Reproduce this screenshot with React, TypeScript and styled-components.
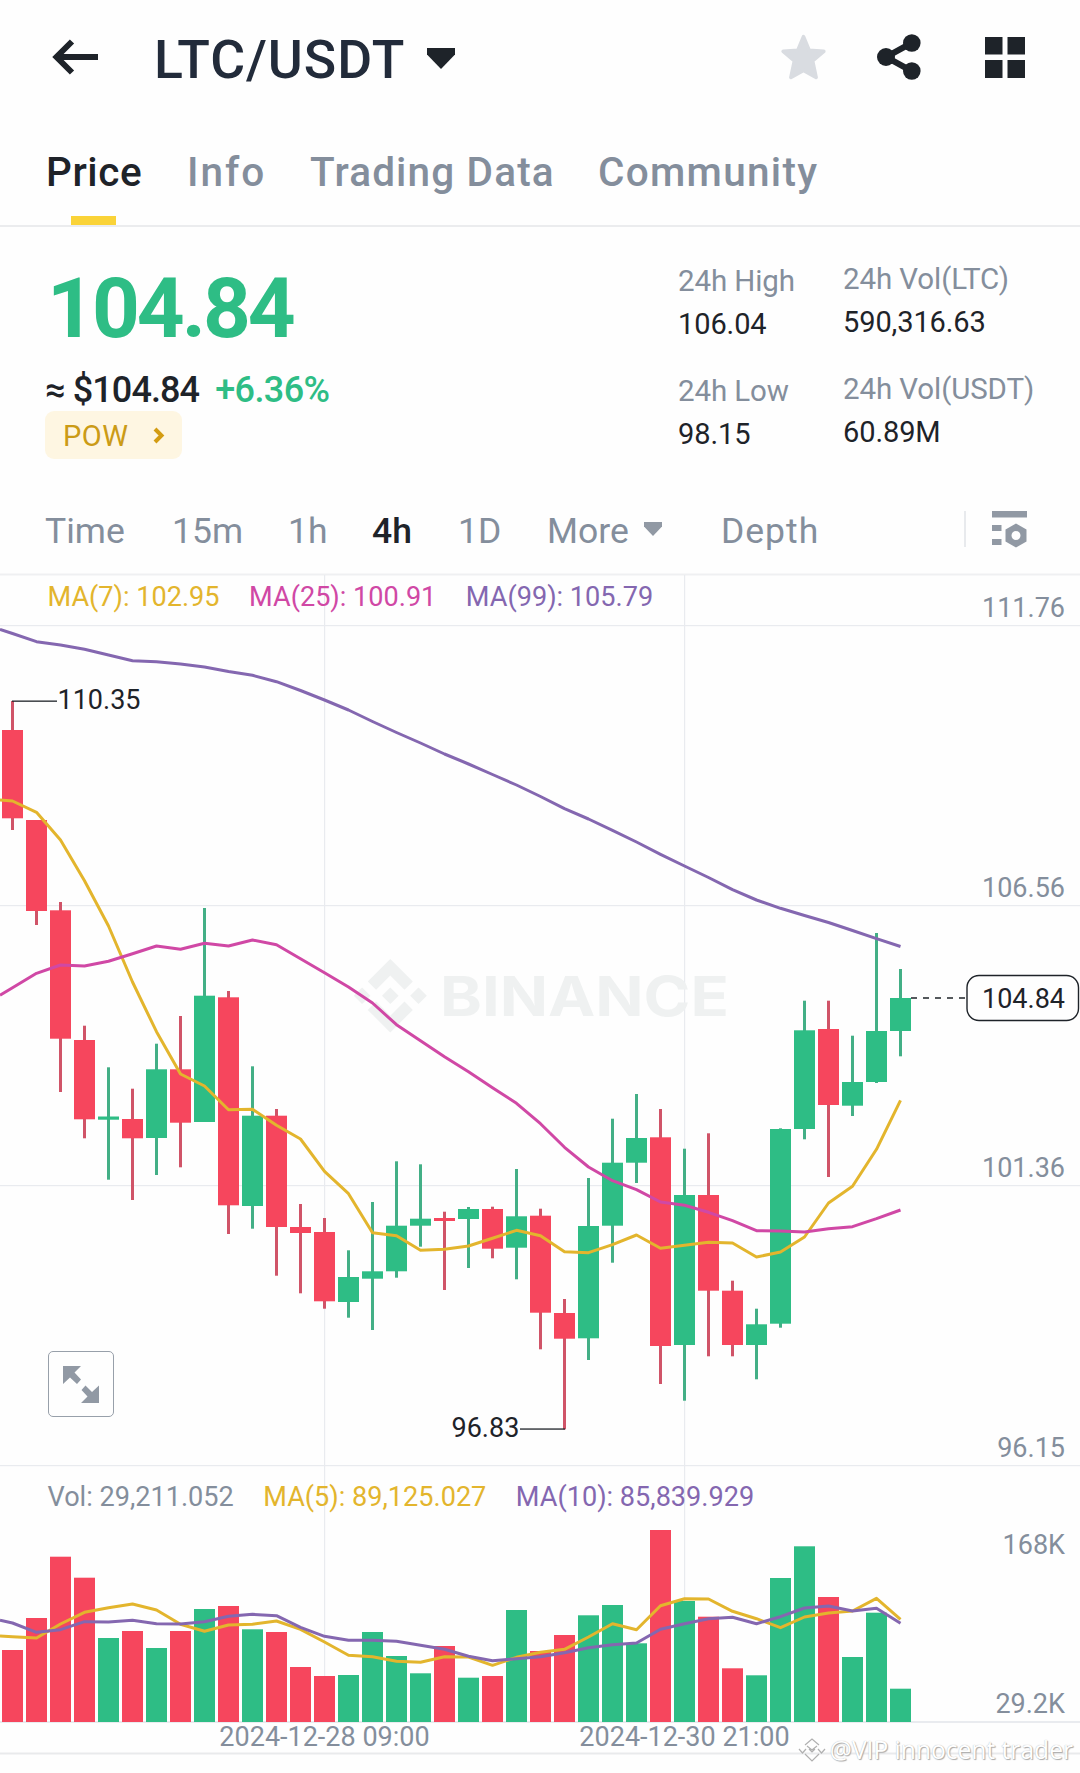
import React from "react";
import styled, { createGlobalStyle } from "styled-components";

const color = {
  ink: "#1e2329",
  title: "#222b3a",
  muted: "#848e9c",
  green: "#2ebd85",
  red: "#f6465d",
  greenWick: "#43af86",
  redWick: "#d05468",
  yellow: "#e3b52d",
  pink: "#d048a5",
  purple: "#8467b0",
  grid: "#e9ebef",
};

const GlobalStyle = createGlobalStyle`
  * { box-sizing: border-box; }
  html, body { margin: 0; padding: 0; background: #fefefe; }
  body { font-family: Roboto, "Liberation Sans", sans-serif; color: ${color.ink}; }
`;

const Screen = styled.main`
  display: flex;
  flex-direction: column;
  width: 1080px;
  height: 1773px;
  overflow: hidden;
  background: #fefefe;
`;

const Header = styled.header`
  display: flex;
  align-items: center;
  height: 118px;
  padding: 0 52px;
`;

const Pair = styled.h1`
  margin: 2px 18px 0 55px;
  width: 255px;
  font-size: 53.5px;
  line-height: 64px;
  font-weight: 500;
  letter-spacing: 0.95px;
  white-space: nowrap;
  color: ${color.title};
`;

const Actions = styled.div`
  display: flex;
  align-items: center;
  gap: 51px;
  margin-left: auto;
  padding-bottom: 4px;
`;

const Icon = styled.svg<{ $lift?: number }>`
  display: block;
  flex: none;
  margin-top: ${(p) => -(p.$lift ?? 0)}px;
`;

const Tabs = styled.nav`
  display: flex;
  height: 109px;
  padding: 26px 0 0 46px;
  border-bottom: 2px solid #ebecee;
`;

const Tab = styled.div<{ $w: number; $ls: number; $active?: boolean }>`
  display: flex;
  flex-direction: column;
  justify-content: space-between;
  flex: 0 0 ${(p) => p.$w}px;
  font-size: 40.5px;
  line-height: 56px;
  font-weight: 500;
  letter-spacing: ${(p) => p.$ls}px;
  white-space: nowrap;
  color: ${(p) => (p.$active ? color.ink : color.muted)};
`;

const Marker = styled.span`
  width: 45px;
  height: 9px;
  margin-left: 25px;
  background: #fad338;
`;

const Summary = styled.section`
  display: flex;
  height: 263px;
`;

const PriceColumn = styled.div`
  display: flex;
  flex-direction: column;
  align-items: flex-start;
  width: 678px;
  padding: 37px 0 0 45px;
`;

const LastPrice = styled.div`
  height: 90px;
  margin-left: 2px;
  font-size: 83.5px;
  line-height: 90px;
  font-weight: 700;
  letter-spacing: -3px;
  color: ${color.green};
`;

const FiatRow = styled.div`
  display: flex;
  gap: 16px;
  height: 57px;
  padding-top: 16px;
  font-size: 36px;
  line-height: 40px;
  font-weight: 500;
`;

const Fiat = styled.span`
  letter-spacing: -0.9px;
`;

const Change = styled.span`
  letter-spacing: -0.6px;
  color: ${color.green};
`;

const Tag = styled.div`
  display: flex;
  align-items: center;
  justify-content: space-between;
  width: 137px;
  height: 48px;
  padding: 1px 17px 0 18px;
  border-radius: 9px;
  font-size: 29px;
  letter-spacing: 0.5px;
  color: #cb9b16;
  background: #fef6e2;
`;

const Stats = styled.dl<{ $top: number; $w: number }>`
  display: flex;
  flex-direction: column;
  width: ${(p) => p.$w}px;
  margin: 0;
  padding-top: ${(p) => p.$top}px;
`;

const StatName = styled.dt`
  font-size: 29.5px;
  line-height: 42px;
  letter-spacing: -0.1px;
  white-space: nowrap;
  color: ${color.muted};
`;

const StatValue = styled.dd`
  margin: 1px 0 25px;
  font-size: 29px;
  line-height: 42px;
  letter-spacing: -0.1px;
  color: ${color.ink};
`;

const Intervals = styled.div`
  display: flex;
  align-items: center;
  height: 83px;
  padding: 0 0 1px 45px;
`;

const Interval = styled.span<{ $w: number; $ls?: number; $active?: boolean }>`
  display: flex;
  align-items: center;
  gap: 15px;
  flex: 0 0 ${(p) => p.$w}px;
  font-size: 35.5px;
  letter-spacing: ${(p) => p.$ls ?? 0}px;
  font-weight: ${(p) => (p.$active ? 500 : 400)};
  color: ${(p) => (p.$active ? color.ink : color.muted)};
`;

const Divider = styled.span`
  width: 2px;
  height: 36px;
  margin: -5px 26px 0 0;
  background: #e8eaed;
`;

const ChartArea = styled.section`
  position: relative;
  height: 1200px;
`;

const Plot = styled.svg`
  display: block;
  font-family: Roboto, "Liberation Sans", sans-serif;
  font-size: 27px;
`;

const Legend = styled.div<{ $top: number }>`
  position: absolute;
  top: ${(p) => p.$top}px;
  left: 47.5px;
  display: flex;
  gap: 29.5px;
  font-size: 27.1px;
  line-height: 36px;
  white-space: nowrap;
`;

const LegendItem = styled.span<{ $color: string }>`
  color: ${(p) => p.$color};
`;

const ExpandButton = styled.button`
  position: absolute;
  top: 778px;
  left: 48px;
  display: flex;
  align-items: center;
  justify-content: center;
  width: 66px;
  height: 66px;
  padding: 0;
  border: 1.5px solid #98a0aa;
  border-radius: 5px;
  background: #fefefe;
`;

const Credit = styled.div`
  position: absolute;
  top: 1159px;
  right: 7px;
  display: flex;
  align-items: center;
  gap: 4px;
  font-family: "Open Sans", "Noto Sans", sans-serif;
  font-size: 24.6px;
  line-height: 36px;
  white-space: nowrap;
  color: #fff;
  text-shadow: 0 0 1px #aaa, 1px 1px 1px #aaa;
`;

// [rising, high, body top, body bottom, low, volume top]
type Candle = [number, number, number, number, number, number];
const candles: Candle[] = [
  [0, 701, 730, 818.3, 830, 1650],
  [0, 820, 820, 911, 925, 1618],
  [0, 902, 910.3, 1038.7, 1092, 1556.7],
  [0, 1025.7, 1040, 1119.3, 1138.3, 1577.7],
  [1, 1067.3, 1116.5, 1119.7, 1179.7, 1638],
  [0, 1088.7, 1119, 1138.3, 1200, 1631],
  [1, 1043.7, 1069.3, 1138, 1175, 1648],
  [0, 1016, 1069.3, 1122.7, 1167.3, 1631],
  [1, 908, 995.7, 1122, 1122, 1609],
  [0, 991, 997.3, 1205.3, 1234, 1606],
  [1, 1066.3, 1115.7, 1206, 1228.7, 1629.3],
  [0, 1109, 1115.7, 1227, 1275.7, 1632],
  [0, 1204, 1227, 1233, 1293.3, 1667],
  [0, 1218, 1232, 1301.3, 1308.7, 1676],
  [1, 1250.3, 1277, 1302, 1317.7, 1675],
  [1, 1202, 1271.3, 1278.7, 1330, 1632],
  [1, 1161.3, 1225.7, 1271.3, 1277.7, 1656],
  [1, 1164.3, 1218.7, 1225.7, 1246.7, 1673.3],
  [0, 1211.7, 1218, 1221, 1290, 1646],
  [1, 1207, 1209, 1219, 1268, 1677.7],
  [0, 1206.7, 1209, 1248.7, 1258.3, 1676],
  [1, 1169, 1216.3, 1247.7, 1279.3, 1610],
  [0, 1208.7, 1215.7, 1312.7, 1349.3, 1651],
  [0, 1299, 1313, 1338.7, 1429.3, 1635],
  [1, 1178, 1226, 1338.3, 1360, 1615.3],
  [1, 1118.7, 1162.7, 1225.7, 1262.7, 1605],
  [1, 1094, 1138, 1162.7, 1183, 1643.3],
  [0, 1109, 1137.3, 1346, 1384, 1530],
  [1, 1148.7, 1195, 1345, 1400.7, 1601],
  [0, 1133.3, 1195, 1290.7, 1356.3, 1616.7],
  [0, 1280.7, 1290.7, 1345, 1356.3, 1668.3],
  [1, 1308.7, 1324.3, 1345, 1379.3, 1675.3],
  [1, 1128.3, 1129, 1323.7, 1327.7, 1578],
  [1, 1000.7, 1030.3, 1129, 1139.3, 1546.3],
  [0, 1000.7, 1029, 1105, 1177, 1597],
  [1, 1035.7, 1082, 1105.7, 1116, 1657],
  [1, 933, 1031, 1082, 1083, 1612.7],
  [1, 969, 998, 1031, 1056.3, 1688.7],
];

// The first value of every average is its height at the left edge.
const ma7 = [800, 801, 812.3, 840, 880.7, 926, 982, 1031.7, 1074, 1086, 1109.7, 1109.3, 1125.3, 1139, 1171.3, 1193.7, 1232.7, 1235.7, 1250.3, 1249.3, 1246, 1238.3, 1230.3, 1235.7, 1251.7, 1252.7, 1244.7, 1235, 1248.3, 1245.3, 1242.3, 1243, 1257, 1252, 1237, 1203, 1186.3, 1149.3, 1100.3];
const ma25 = [995.3, 987.7, 973.3, 965, 966, 961.3, 953.7, 946, 949.3, 943.3, 946, 940, 944.7, 958.7, 972.7, 987, 1003, 1024.7, 1040.7, 1056.7, 1071.7, 1087.7, 1103.3, 1123.7, 1147.3, 1167, 1180.7, 1189.7, 1202, 1205.3, 1212.3, 1220.7, 1230.7, 1231, 1232, 1228.7, 1226.7, 1218.7, 1210];
const ma99 = [629.3, 633.5, 641.7, 645, 649.3, 655, 660.7, 661.7, 664, 667, 671.5, 675.3, 681.7, 690.5, 700, 710, 721.5, 732.5, 743, 754, 764, 774.5, 785, 796.5, 808.7, 819, 830.3, 842, 854.3, 866, 877.5, 889.7, 900, 908.3, 915.5, 922.5, 930.5, 938.7, 946.5];
const volMa5 = [1636, 1636.7, 1638, 1624, 1612.3, 1607.7, 1604, 1610, 1624.3, 1631.3, 1625, 1624.3, 1621, 1629.3, 1642, 1655.3, 1656.7, 1661.3, 1662.3, 1656.7, 1657, 1665.3, 1657.3, 1652.3, 1649.3, 1637, 1623.7, 1629.7, 1605.7, 1598.7, 1599, 1611.3, 1618.7, 1627.7, 1617, 1613, 1611, 1598.3, 1619.3];
const volMa10 = [1620.3, 1623, 1632.3, 1629.7, 1621.7, 1622, 1620.3, 1623.7, 1624, 1621.7, 1616.3, 1614.3, 1615.7, 1627.3, 1636.3, 1640.3, 1640.3, 1641.3, 1645.3, 1649.3, 1656.3, 1660.7, 1658.7, 1656.7, 1652.7, 1647.7, 1644.7, 1643, 1629.3, 1623.7, 1618.7, 1617.3, 1623.7, 1616.7, 1608, 1606, 1611, 1608.3, 1623.3];

const centre = (i: number) => 12.5 + i * 24;
const points = (ys: number[]) =>
  ys.map((y, i) => `${i === 0 ? 0 : centre(i - 1)},${y}`).join(" ");

const Average = ({ ys, stroke }: { ys: number[]; stroke: string }) => (
  <polyline points={points(ys)} fill="none" stroke={stroke} strokeWidth={3} strokeLinejoin="round" />
);

const axisLabels: [string, number][] = [
  ["111.76", 617],
  ["106.56", 897],
  ["101.36", 1177],
  ["96.15", 1457],
  ["168K", 1554],
  ["29.2K", 1713],
];

function Chart() {
  return (
    <Plot width="1080" height="1200" viewBox="0 573 1080 1200">
      <rect x="0" y="573.5" width="1080" height="2" fill="#eff0f2" />
      {[625, 905, 1185, 1465].map((y) => (
        <rect key={y} x="0" y={y} width="1080" height="1.2" fill={color.grid} />
      ))}
      {[324, 684].map((x) => (
        <rect key={x} x={x} y="575" width="1.2" height="1147" fill={color.grid} />
      ))}
      <rect x="0" y="1721" width="1080" height="2" fill="#e9ebef" />
      <rect x="0" y="1752.5" width="1080" height="2" fill="#e9eaec" />

      <g fill="#eff1f1">
        <path d="M390.3 959l22.5 22.5-8.3 8.3-14.2-14.2-14.2 14.2-8.3-8.3z" />
        <path d="M390.3 1032.4l22.5-22.5-8.3-8.3-14.2 14.2-14.2-14.2-8.3 8.3z" />
        <path d="M390.3 987.4l8.3 8.3-8.3 8.3-8.3-8.3zM362.1 987.4l8.3 8.3-8.3 8.3-8.3-8.3zM418.5 987.4l8.3 8.3-8.3 8.3-8.3-8.3z" />
        <text x="440" y="1016" fontFamily="Inter, sans-serif" fontSize="55.5" fontWeight="700" textLength="289" lengthAdjust="spacingAndGlyphs">
          BINANCE
        </text>
      </g>

      {candles.map(([up, high, top, bottom, low, volume], i) => (
        <g key={i}>
          <rect x={centre(i) - 1.5} y={high} width="3" height={low - high} fill={up ? color.greenWick : color.redWick} />
          <rect x={centre(i) - 10.5} y={top} width="21" height={bottom - top} fill={up ? color.green : color.red} />
          <rect x={centre(i) - 10.5} y={volume} width="21" height={1722 - volume} fill={up ? color.green : color.red} />
        </g>
      ))}

      <Average ys={ma7} stroke={color.yellow} />
      <Average ys={ma25} stroke={color.pink} />
      <Average ys={ma99} stroke={color.purple} />
      <Average ys={volMa5} stroke={color.yellow} />
      <Average ys={volMa10} stroke={color.purple} />

      <g fill={color.ink}>
        <rect x="12" y="700.5" width="45" height="1.3" />
        <text x="57.5" y="709">110.35</text>
        <rect x="520" y="1428.4" width="45" height="1.3" />
        <text x="451.5" y="1437">96.83</text>
      </g>

      <path d="M911 998H966" stroke={color.ink} strokeWidth="1.4" strokeDasharray="6 6" />
      <rect x="967" y="975.5" width="111.5" height="45" rx="12" fill="#fefefe" stroke={color.ink} strokeWidth="1.4" />
      <text x="982" y="1008" fill={color.ink}>104.84</text>

      <g fill={color.muted}>
        {axisLabels.map(([label, y]) => (
          <text key={label} x="1065" y={y} textAnchor="end">{label}</text>
        ))}
        <text x="324.5" y="1745.7" textAnchor="middle">2024-12-28 09:00</text>
        <text x="684.5" y="1745.7" textAnchor="middle">2024-12-30 21:00</text>
      </g>
    </Plot>
  );
}

export default function App() {
  return (
    <>
      <GlobalStyle />
      <Screen>
        <Header>
          <Icon $lift={4} width="47" height="36" viewBox="0 0 47 36">
            <path d="M46 18H5M20 2.5L4.5 18 20 33.5" fill="none" stroke={color.ink} strokeWidth="6" />
          </Icon>
          <Pair>LTC/USDT</Pair>
          <Icon $lift={2} width="28" height="21" viewBox="0 0 28 21">
            <path d="M0 0h28v6.5L14 21 0 6.5z" fill={color.ink} />
          </Icon>
          <Actions>
            <Icon width="45" height="46" viewBox="0 0 45 46">
              <path
                d="M22.5 2.6l5.6 13.6 14.7 1.1-11.2 9.6 3.5 16.5-12.6-7-12.6 7 3.5-16.5L2.2 17.3l14.7-1.1z"
                fill="#d9dce1"
                stroke="#d9dce1"
                strokeWidth="3.6"
                strokeLinejoin="round"
              />
            </Icon>
            <Icon width="44" height="46" viewBox="0 0 44 46">
              <path d="M34.5 9L9 23l25.5 14" fill="none" stroke={color.ink} strokeWidth="6" />
              <circle cx="34.8" cy="9" r="8.8" fill={color.ink} />
              <circle cx="34.8" cy="37" r="8.8" fill={color.ink} />
              <circle cx="9" cy="23" r="9" fill={color.ink} />
            </Icon>
            <Icon width="56" height="41" viewBox="0 0 56 41">
              <path d="M13 0h17.5v17.5H13zM35.5 0H53v17.5H35.5zM13 23h17.5v18H13zM35.5 23H53v18H35.5z" fill={color.ink} />
            </Icon>
          </Actions>
        </Header>

        <Tabs>
          <Tab $w={141} $ls={0.6} $active>
            Price
            <Marker />
          </Tab>
          <Tab $w={123} $ls={2}>Info</Tab>
          <Tab $w={288} $ls={1.15}>Trading Data</Tab>
          <Tab $w={240} $ls={1.3}>Community</Tab>
        </Tabs>

        <Summary>
          <PriceColumn>
            <LastPrice>104.84</LastPrice>
            <FiatRow>
              <Fiat>≈ $104.84</Fiat>
              <Change>+6.36%</Change>
            </FiatRow>
            <Tag>
              POW
              <Icon width="12" height="17" viewBox="0 0 12 17">
                <path d="M2 2l6.5 6.5L2 15" fill="none" stroke="#d39c12" strokeWidth="4" />
              </Icon>
            </Tag>
          </PriceColumn>
          <Stats $top={33} $w={165}>
            <StatName>24h High</StatName>
            <StatValue>106.04</StatValue>
            <StatName>24h Low</StatName>
            <StatValue>98.15</StatValue>
          </Stats>
          <Stats $top={31} $w={230}>
            <StatName>24h Vol(LTC)</StatName>
            <StatValue>590,316.63</StatValue>
            <StatName>24h Vol(USDT)</StatName>
            <StatValue>60.89M</StatValue>
          </Stats>
        </Summary>

        <Intervals>
          <Interval $w={127}>Time</Interval>
          <Interval $w={116}>15m</Interval>
          <Interval $w={84}>1h</Interval>
          <Interval $w={86} $active>4h</Interval>
          <Interval $w={89}>1D</Interval>
          <Interval $w={174}>
            More
            <Icon $lift={4} width="18" height="14" viewBox="0 0 18 14">
              <path d="M0 0h18v4.5L9 14 0 4.5z" fill="#9199a4" />
            </Icon>
          </Interval>
          <Interval $w={243} $ls={1}>Depth</Interval>
          <Divider />
          <Icon $lift={4} width="35" height="37" viewBox="0 0 35 37">
            <path d="M0 0h35v6.5H0zM0 14h9.5v6H0zM0 28h9.5v6H0z" fill="#9199a4" />
            <path fillRule="evenodd" d="M24 12.500l10.500 6v12l-10.500 6-10.500-6v-12zM24 20a4.500 4.500 0 1 0 0 9 4.500 4.500 0 0 0 0-9z" fill="#9199a4" />
          </Icon>
        </Intervals>

        <ChartArea>
          <Chart />
          <Legend $top={6}>
            <LegendItem $color={color.yellow}>MA(7): 102.95</LegendItem>
            <LegendItem $color={color.pink}>MA(25): 100.91</LegendItem>
            <LegendItem $color={color.purple}>MA(99): 105.79</LegendItem>
          </Legend>
          <Legend $top={906}>
            <LegendItem $color={color.muted}>Vol: 29,211.052</LegendItem>
            <LegendItem $color={color.yellow}>MA(5): 89,125.027</LegendItem>
            <LegendItem $color={color.purple}>MA(10): 85,839.929</LegendItem>
          </Legend>
          <ExpandButton aria-label="Full screen">
            <Icon width="36" height="37" viewBox="0 0 36 37">
              <path d="M0 0h18l-6.500 6.500 6.500 7-4 4.500-7-6.500-7 6.500zM36 37H18l6.500-6.500-6-6.500 4-4.500 6.500 6.500 7-6.500z" fill="#9199a4" />
            </Icon>
          </ExpandButton>
          <Credit>
            <Icon width="28" height="24" viewBox="0 0 28 24">
              <path
                d="M7 7l7-6 7 6M9 8l5 4 5-4M7 16l7 7 7-7M1 11l3.500 4L8 11M20 11l3.500 4 3.500-4M11 11l3 3 3-3"
                fill="none"
                stroke="#b0b0b0"
                strokeWidth="1.200"
              />
            </Icon>
            @VIP innocent trader
          </Credit>
        </ChartArea>
      </Screen>
    </>
  );
}
